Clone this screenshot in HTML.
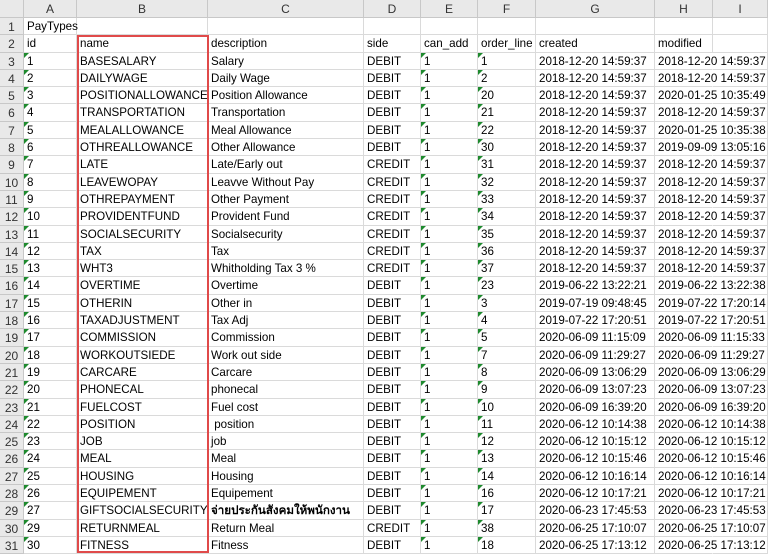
<!DOCTYPE html>
<html><head><meta charset="utf-8"><style>
*{box-sizing:border-box;margin:0;padding:0}
body{width:768px;height:554px;overflow:hidden;background:#fff;font-family:"Liberation Sans","Noto Sans CJK SC",sans-serif;font-size:11.6px;color:#000;position:relative}
.r{display:flex;height:17.3px;line-height:18px}
.r>span{flex:none;border-right:1px solid #dadada;border-bottom:1px solid #dadada;white-space:nowrap;overflow:visible;padding-left:3px;position:relative}
.r>span:nth-child(1){width:24px;background:#e9e9e9;text-align:center;padding:0;border-color:#c8c8c8;color:#333;font-size:12px}
.r>span:nth-child(2){width:53px}
.r>span:nth-child(3){width:131px}
.r>span:nth-child(4){width:156px}
.r>span:nth-child(5){width:57px}
.r>span:nth-child(6){width:57px}
.r>span:nth-child(7){width:58px}
.r>span:nth-child(8){width:119px}
.r>span:nth-child(9){width:58px;z-index:2;border-right-color:transparent}
.r>span:nth-child(10){width:55px}
.h>span:nth-child(9),.e>span:nth-child(9){border-right-color:#dadada}
.h{height:18px}
.h>span{background:#e9e9e9;text-align:center;border-color:#c8c8c8!important;padding:0!important;color:#333;font-size:12px}
.g::before{content:"";position:absolute;left:0;top:0;border-top:5px solid #1e8a2e;border-right:5px solid transparent}
.box{position:absolute;left:77px;top:35px;width:132px;height:518px;border:2px solid #e04a4a;z-index:5}
</style></head><body>
<div class="r h"><span style="background:#e9e9e9"></span><span>A</span><span>B</span><span>C</span><span>D</span><span>E</span><span>F</span><span>G</span><span style="border-right:1px solid #c8c8c8">H</span><span>I</span></div>
<div class="r e"><span>1</span><span>PayTypes</span><span></span><span></span><span></span><span></span><span></span><span></span><span></span><span></span></div>
<div class="r e"><span>2</span><span>id</span><span>name</span><span>description</span><span>side</span><span>can_add</span><span>order_line</span><span>created</span><span>modified</span><span></span></div>
<div class="r"><span>3</span><span class="g">1</span><span>BASESALARY</span><span>Salary</span><span>DEBIT</span><span class="g">1</span><span class="g">1</span><span>2018-12-20 14:59:37</span><span>2018-12-20 14:59:37</span><span></span></div>
<div class="r"><span>4</span><span class="g">2</span><span>DAILYWAGE</span><span>Daily Wage</span><span>DEBIT</span><span class="g">1</span><span class="g">2</span><span>2018-12-20 14:59:37</span><span>2018-12-20 14:59:37</span><span></span></div>
<div class="r"><span>5</span><span class="g">3</span><span>POSITIONALLOWANCE</span><span>Position Allowance</span><span>DEBIT</span><span class="g">1</span><span class="g">20</span><span>2018-12-20 14:59:37</span><span>2020-01-25 10:35:49</span><span></span></div>
<div class="r"><span>6</span><span class="g">4</span><span>TRANSPORTATION</span><span>Transportation</span><span>DEBIT</span><span class="g">1</span><span class="g">21</span><span>2018-12-20 14:59:37</span><span>2018-12-20 14:59:37</span><span></span></div>
<div class="r"><span>7</span><span class="g">5</span><span>MEALALLOWANCE</span><span>Meal Allowance</span><span>DEBIT</span><span class="g">1</span><span class="g">22</span><span>2018-12-20 14:59:37</span><span>2020-01-25 10:35:38</span><span></span></div>
<div class="r"><span>8</span><span class="g">6</span><span>OTHREALLOWANCE</span><span>Other Allowance</span><span>DEBIT</span><span class="g">1</span><span class="g">30</span><span>2018-12-20 14:59:37</span><span>2019-09-09 13:05:16</span><span></span></div>
<div class="r"><span>9</span><span class="g">7</span><span>LATE</span><span>Late/Early out</span><span>CREDIT</span><span class="g">1</span><span class="g">31</span><span>2018-12-20 14:59:37</span><span>2018-12-20 14:59:37</span><span></span></div>
<div class="r"><span>10</span><span class="g">8</span><span>LEAVEWOPAY</span><span>Leavve Without Pay</span><span>CREDIT</span><span class="g">1</span><span class="g">32</span><span>2018-12-20 14:59:37</span><span>2018-12-20 14:59:37</span><span></span></div>
<div class="r"><span>11</span><span class="g">9</span><span>OTHREPAYMENT</span><span>Other Payment</span><span>CREDIT</span><span class="g">1</span><span class="g">33</span><span>2018-12-20 14:59:37</span><span>2018-12-20 14:59:37</span><span></span></div>
<div class="r"><span>12</span><span class="g">10</span><span>PROVIDENTFUND</span><span>Provident Fund</span><span>CREDIT</span><span class="g">1</span><span class="g">34</span><span>2018-12-20 14:59:37</span><span>2018-12-20 14:59:37</span><span></span></div>
<div class="r"><span>13</span><span class="g">11</span><span>SOCIALSECURITY</span><span>Socialsecurity</span><span>CREDIT</span><span class="g">1</span><span class="g">35</span><span>2018-12-20 14:59:37</span><span>2018-12-20 14:59:37</span><span></span></div>
<div class="r"><span>14</span><span class="g">12</span><span>TAX</span><span>Tax</span><span>CREDIT</span><span class="g">1</span><span class="g">36</span><span>2018-12-20 14:59:37</span><span>2018-12-20 14:59:37</span><span></span></div>
<div class="r"><span>15</span><span class="g">13</span><span>WHT3</span><span>Whitholding Tax 3 %</span><span>CREDIT</span><span class="g">1</span><span class="g">37</span><span>2018-12-20 14:59:37</span><span>2018-12-20 14:59:37</span><span></span></div>
<div class="r"><span>16</span><span class="g">14</span><span>OVERTIME</span><span>Overtime</span><span>DEBIT</span><span class="g">1</span><span class="g">23</span><span>2019-06-22 13:22:21</span><span>2019-06-22 13:22:38</span><span></span></div>
<div class="r"><span>17</span><span class="g">15</span><span>OTHERIN</span><span>Other in</span><span>DEBIT</span><span class="g">1</span><span class="g">3</span><span>2019-07-19 09:48:45</span><span>2019-07-22 17:20:14</span><span></span></div>
<div class="r"><span>18</span><span class="g">16</span><span>TAXADJUSTMENT</span><span>Tax Adj</span><span>DEBIT</span><span class="g">1</span><span class="g">4</span><span>2019-07-22 17:20:51</span><span>2019-07-22 17:20:51</span><span></span></div>
<div class="r"><span>19</span><span class="g">17</span><span>COMMISSION</span><span>Commission</span><span>DEBIT</span><span class="g">1</span><span class="g">5</span><span>2020-06-09 11:15:09</span><span>2020-06-09 11:15:33</span><span></span></div>
<div class="r"><span>20</span><span class="g">18</span><span>WORKOUTSIEDE</span><span>Work out side</span><span>DEBIT</span><span class="g">1</span><span class="g">7</span><span>2020-06-09 11:29:27</span><span>2020-06-09 11:29:27</span><span></span></div>
<div class="r"><span>21</span><span class="g">19</span><span>CARCARE</span><span>Carcare</span><span>DEBIT</span><span class="g">1</span><span class="g">8</span><span>2020-06-09 13:06:29</span><span>2020-06-09 13:06:29</span><span></span></div>
<div class="r"><span>22</span><span class="g">20</span><span>PHONECAL</span><span>phonecal</span><span>DEBIT</span><span class="g">1</span><span class="g">9</span><span>2020-06-09 13:07:23</span><span>2020-06-09 13:07:23</span><span></span></div>
<div class="r"><span>23</span><span class="g">21</span><span>FUELCOST</span><span>Fuel cost</span><span>DEBIT</span><span class="g">1</span><span class="g">10</span><span>2020-06-09 16:39:20</span><span>2020-06-09 16:39:20</span><span></span></div>
<div class="r"><span>24</span><span class="g">22</span><span>POSITION</span><span>&nbsp;position</span><span>DEBIT</span><span class="g">1</span><span class="g">11</span><span>2020-06-12 10:14:38</span><span>2020-06-12 10:14:38</span><span></span></div>
<div class="r"><span>25</span><span class="g">23</span><span>JOB</span><span>job</span><span>DEBIT</span><span class="g">1</span><span class="g">12</span><span>2020-06-12 10:15:12</span><span>2020-06-12 10:15:12</span><span></span></div>
<div class="r"><span>26</span><span class="g">24</span><span>MEAL</span><span>Meal</span><span>DEBIT</span><span class="g">1</span><span class="g">13</span><span>2020-06-12 10:15:46</span><span>2020-06-12 10:15:46</span><span></span></div>
<div class="r"><span>27</span><span class="g">25</span><span>HOUSING</span><span>Housing</span><span>DEBIT</span><span class="g">1</span><span class="g">14</span><span>2020-06-12 10:16:14</span><span>2020-06-12 10:16:14</span><span></span></div>
<div class="r"><span>28</span><span class="g">26</span><span>EQUIPEMENT</span><span>Equipement</span><span>DEBIT</span><span class="g">1</span><span class="g">16</span><span>2020-06-12 10:17:21</span><span>2020-06-12 10:17:21</span><span></span></div>
<div class="r"><span>29</span><span class="g">27</span><span>GIFTSOCIALSECURITY</span><span style="font-weight:bold">จ่ายประกันสังคมให้พนักงาน</span><span>DEBIT</span><span class="g">1</span><span class="g">17</span><span>2020-06-23 17:45:53</span><span>2020-06-23 17:45:53</span><span></span></div>
<div class="r"><span>30</span><span class="g">29</span><span>RETURNMEAL</span><span>Return Meal</span><span>CREDIT</span><span class="g">1</span><span class="g">38</span><span>2020-06-25 17:10:07</span><span>2020-06-25 17:10:07</span><span></span></div>
<div class="r"><span>31</span><span class="g">30</span><span>FITNESS</span><span>Fitness</span><span>DEBIT</span><span class="g">1</span><span class="g">18</span><span>2020-06-25 17:13:12</span><span>2020-06-25 17:13:12</span><span></span></div>
<div class="box"></div>
</body></html>
